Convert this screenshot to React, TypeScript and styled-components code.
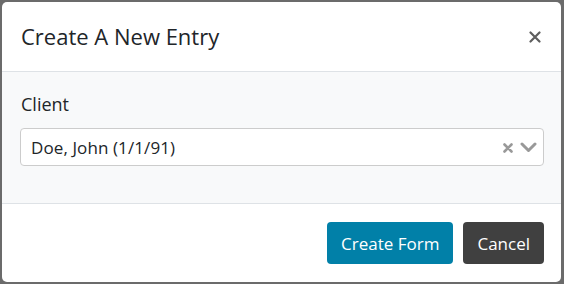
import styled, { createGlobalStyle } from "styled-components"

const GlobalStyle = createGlobalStyle`
  html, body {
    margin: 0;
    padding: 0;
    background: #6b6b6b;
  }
  * {
    box-sizing: border-box;
  }
`

export default function App() {
  return (
    <>
      <GlobalStyle />
      <Backdrop>
        <Modal>
          <Header>
            <Title>Create A New Entry</Title>
            <CloseButton aria-label="Close">
              <svg width="12" height="12" viewBox="0 0 12 12">
                <path d="M1.5 1.5 L10.5 10.5 M10.5 1.5 L1.5 10.5" stroke="#5e5e5e" strokeWidth="2.2" strokeLinecap="round" />
              </svg>
            </CloseButton>
          </Header>
          <Body>
            <Label>Client</Label>
            <Select>
              <SelectValue>Doe, John (1/1/91)</SelectValue>
              <SelectIcons>
                <svg width="10" height="10" viewBox="0 0 10 10">
                  <path d="M1.5 1.5 L8.5 8.5 M8.5 1.5 L1.5 8.5" stroke="#999999" strokeWidth="2.6" strokeLinecap="round" />
                </svg>
                <svg width="17" height="11" viewBox="0 0 17 11">
                  <path d="M2 2 L8.5 8.5 L15 2" fill="none" stroke="#999999" strokeWidth="3" strokeLinecap="round" strokeLinejoin="round" />
                </svg>
              </SelectIcons>
            </Select>
          </Body>
          <Footer>
            <Button $variant="primary">Create Form</Button>
            <Button $variant="dark">Cancel</Button>
          </Footer>
        </Modal>
      </Backdrop>
    </>
  )
}

const Backdrop = styled.div`
  width: 564px;
  height: 284px;
  padding: 2px 3px 2px 2px;
`

const Modal = styled.div`
  width: 559px;
  height: 280px;
  background: #ffffff;
  border-radius: 5px;
  overflow: hidden;
  display: flex;
  flex-direction: column;
  font-family: "Open Sans", "Noto Sans", sans-serif;
  color: #212529;
`

const Header = styled.div`
  height: 70px;
  padding: 0 20px 0 19px;
  display: flex;
  align-items: center;
  justify-content: space-between;
  border-bottom: 1px solid #dee2e6;
`

const Title = styled.h5`
  margin: 0 0 1px;
  font-size: 22px;
  font-weight: 400;
`

const CloseButton = styled.button`
  border: 0;
  background: transparent;
  padding: 0;
  display: flex;
  cursor: pointer;
`

const Body = styled.div`
  height: 132px;
  background: #f8f9fa;
  border-bottom: 1px solid #dee2e6;
  padding: 19px 17px 0 18px;
`

const Label = styled.div`
  font-size: 18px;
  line-height: 26px;
  margin-bottom: 11px;
  margin-left: 1px;
`

const Select = styled.div`
  height: 38px;
  background: #ffffff;
  border: 1px solid #cccccc;
  border-radius: 4px;
  display: flex;
  align-items: center;
  justify-content: space-between;
  padding: 0 6px 0 10px;
`

const SelectValue = styled.span`
  font-size: 17px;
  letter-spacing: 0.1px;
`

const SelectIcons = styled.div`
  display: flex;
  align-items: center;
  gap: 7px;
  margin-top: 1px;
`

const Footer = styled.div`
  flex: 1;
  display: flex;
  justify-content: flex-end;
  align-items: center;
  gap: 10px;
  padding: 0 17px 0 0;
`

const Button = styled.button<{ $variant: "primary" | "dark" }>`
  height: 42px;
  border: 0;
  border-radius: 4px;
  padding: 0 14px;
  font-family: "Open Sans", "Noto Sans", sans-serif;
  font-size: 17px;
  color: #ffffff;
  background: ${p => (p.$variant === "primary" ? "#0180a8" : "#404040")};
  cursor: pointer;
`
